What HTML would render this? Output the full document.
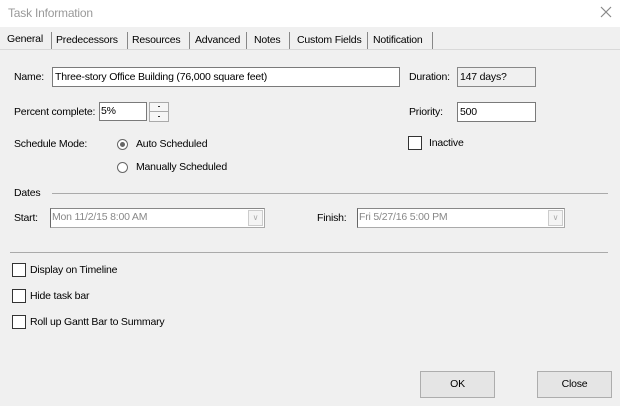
<!DOCTYPE html>
<html><head><style>
*{margin:0;padding:0;box-sizing:border-box}
body{width:620px;height:406px;background:#f0f0f0;font-family:"Liberation Sans",sans-serif;font-size:10.5px;letter-spacing:-0.2px;color:#000;position:relative;overflow:hidden}
.a{position:absolute;white-space:nowrap}
.box{position:absolute;background:#fff;border:1px solid #7a7a7a}
.cb{position:absolute;width:14px;height:14px;background:#fff;border:1px solid #333}
.btn{position:absolute;background:#e5e5e5;border:1px solid #adadad;text-align:center;line-height:25px}
.sep{position:absolute;width:1px;background:#888}
</style></head><body>
<div class="a" style="left:0;top:0;width:620px;height:27px;background:#fff"></div>
<div class="a" style="left:8px;top:6px;font-size:12px;color:#999">Task Information</div>
<svg class="a" style="left:600px;top:6px" width="12" height="12"><path d="M1 1L11 11M11 1L1 11" stroke="#888" stroke-width="1.2"/></svg>
<div class="a" style="left:0;top:49px;width:620px;height:1px;background:#d9d9d9"></div>
<div class="a" style="left:7px;top:33px">General</div>
<div class="sep" style="left:51px;top:32px;height:17px"></div>
<div class="a" style="left:56px;top:34px">Predecessors</div>
<div class="sep" style="left:127px;top:32px;height:17px"></div>
<div class="a" style="left:132px;top:34px">Resources</div>
<div class="sep" style="left:189px;top:32px;height:17px"></div>
<div class="a" style="left:195px;top:34px">Advanced</div>
<div class="sep" style="left:246px;top:32px;height:17px"></div>
<div class="a" style="left:254px;top:34px">Notes</div>
<div class="sep" style="left:289px;top:32px;height:17px"></div>
<div class="a" style="left:297px;top:34px">Custom Fields</div>
<div class="sep" style="left:367px;top:32px;height:17px"></div>
<div class="a" style="left:373px;top:34px">Notification</div>
<div class="sep" style="left:432px;top:32px;height:17px"></div>

<div class="a" style="left:14px;top:71px">Name:</div>
<div class="box" style="left:52px;top:67px;width:348px;height:20px"></div>
<div class="a" style="left:55px;top:71px">Three-story Office Building (76,000 square feet)</div>
<div class="a" style="left:409px;top:71px">Duration:</div>
<div class="box" style="left:457px;top:67px;width:79px;height:20px;background:#f0f0f0;border-color:#888"></div>
<div class="a" style="left:460px;top:71px">147 days?</div>

<div class="a" style="left:14px;top:106px">Percent complete:</div>
<div class="box" style="left:99px;top:102px;width:48px;height:19px"></div>
<div class="a" style="left:101px;top:105px">5%</div>
<div class="a" style="left:149px;top:102px;width:20px;height:20px;border:1px solid #aaa;background:#f6f6f6"></div>
<div class="a" style="left:149px;top:111px;width:20px;height:1px;background:#aaa"></div>
<div class="a" style="left:158px;top:106px;width:2px;height:1px;background:#333"></div>
<div class="a" style="left:158px;top:116px;width:2px;height:1px;background:#333"></div>
<div class="a" style="left:409px;top:106px">Priority:</div>
<div class="box" style="left:457px;top:102px;width:79px;height:20px"></div>
<div class="a" style="left:460px;top:106px">500</div>

<div class="a" style="left:14px;top:138px">Schedule Mode:</div>
<div class="a" style="left:117px;top:139px;width:11px;height:11px;border:1px solid #666;border-radius:50%;background:#fff"></div>
<div class="a" style="left:120px;top:142px;width:5px;height:5px;border-radius:50%;background:#666"></div>
<div class="a" style="left:136px;top:138px">Auto Scheduled</div>
<div class="a" style="left:117px;top:162px;width:11px;height:11px;border:1px solid #666;border-radius:50%;background:#fff"></div>
<div class="a" style="left:136px;top:161px">Manually Scheduled</div>
<div class="cb" style="left:408px;top:136px"></div>
<div class="a" style="left:429px;top:137px">Inactive</div>

<div class="a" style="left:14px;top:187px">Dates</div>
<div class="a" style="left:52px;top:193px;width:556px;height:1px;background:#aaa"></div>
<div class="a" style="left:14px;top:212px">Start:</div>
<div class="box" style="left:50px;top:208px;width:215px;height:20px;border-color:#aaa;border-left-color:#666;border-top-color:#888"></div>
<div class="a" style="left:52px;top:211px;color:#888">Mon 11/2/15 8:00 AM</div>
<div class="a" style="left:248px;top:210px;width:15px;height:16px;border:1px solid #ccc;background:#f4f4f4;color:#aaa;font-size:8px;text-align:center;line-height:14px">∨</div>
<div class="a" style="left:317px;top:212px">Finish:</div>
<div class="box" style="left:357px;top:208px;width:208px;height:20px;border-color:#aaa;border-left-color:#666;border-top-color:#888"></div>
<div class="a" style="left:359px;top:211px;color:#888">Fri 5/27/16 5:00 PM</div>
<div class="a" style="left:548px;top:210px;width:15px;height:16px;border:1px solid #ccc;background:#f4f4f4;color:#aaa;font-size:8px;text-align:center;line-height:14px">∨</div>

<div class="a" style="left:10px;top:252px;width:598px;height:1px;background:#aaa"></div>
<div class="cb" style="left:12px;top:263px"></div>
<div class="a" style="left:30px;top:264px">Display on Timeline</div>
<div class="cb" style="left:12px;top:289px"></div>
<div class="a" style="left:30px;top:290px">Hide task bar</div>
<div class="cb" style="left:12px;top:315px"></div>
<div class="a" style="left:30px;top:316px">Roll up Gantt Bar to Summary</div>

<div class="btn" style="left:420px;top:371px;width:75px;height:27px">OK</div>
<div class="btn" style="left:537px;top:371px;width:75px;height:27px">Close</div>
</body></html>
